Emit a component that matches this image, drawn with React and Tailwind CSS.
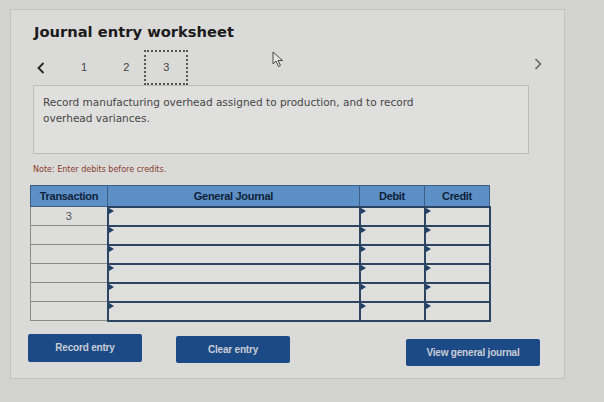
import React from "react";

const rows = ["3", "", "", "", "", ""];

function Marker() {
    return (
        <span className="absolute left-0 top-0 w-0 h-0 border-t-[3px] border-b-[3px] border-l-[5px] border-t-transparent border-b-transparent border-l-[#1f3f66]" />
    );
}

export default function App() {
    return (
        <div className="relative w-[604px] h-[402px] bg-[#d2d3d0] overflow-hidden pt-[9px] pl-[10px]">
            {/* Panel */}
            <div className="w-[555px] h-[370px] border border-[#c2c3c0] bg-[#dadad8] pl-[22px] pt-[13px]">
                <h1 className="font-['DejaVu_Sans',sans-serif] font-bold text-[14.7px] leading-[18px] text-[#1b1b1b] pl-px">
                    Journal entry worksheet
                </h1>

                {/* Step nav */}
                <div className="flex items-center h-[35px] mt-[9px] w-[510px] font-['Liberation_Sans',sans-serif] text-[11px] text-[#444]">
                    <svg width="10" height="14" viewBox="0 0 10 14" className="ml-[3px]">
                        <path d="M7.5 2 L2.5 7 L7.5 12" fill="none" stroke="#222" strokeWidth="1.8" />
                    </svg>
                    <span className="ml-[35px]">1</span>
                    <span className="ml-[36px]">2</span>
                    <div className="ml-[15px] w-[44px] h-[35px] border-2 border-dotted border-[#555] flex items-center justify-center">
                        3
                    </div>
                    <svg width="10" height="14" viewBox="0 0 10 14" className="ml-auto -mt-[8px]">
                        <path d="M2.5 2 L7.5 7 L2.5 12" fill="none" stroke="#666" strokeWidth="1.6" />
                    </svg>
                </div>

                {/* Description */}
                <div className="w-[496px] h-[69px] border border-[#bcbcba] bg-[#dfdfdd] px-[9px] pt-[8px] font-['DejaVu_Sans',sans-serif] text-[10.5px] leading-[16px] text-[#464646]">
                    Record manufacturing overhead assigned to production, and to record
                    <br />
                    overhead variances.
                </div>

                <p className="mt-[11px] font-['DejaVu_Sans',sans-serif] text-[8px] leading-[10px] text-[#8a3b2b]">
                    Note: Enter debits before credits.
                </p>

                {/* Table */}
                <table className="mt-[10px] -ml-[3px] border-collapse font-['Liberation_Sans',sans-serif] text-[11px]">
                    <thead>
                        <tr className="h-[21px] bg-[#5b8fc6] text-[#0f1f38] font-bold">
                            <th className="w-[77px] border border-[#3d5f85] font-bold tracking-[-0.3px]">Transaction</th>
                            <th className="w-[252px] border border-[#3d5f85] font-bold tracking-[-0.3px]">General Journal</th>
                            <th className="w-[65px] border border-[#3d5f85] font-bold tracking-[-0.3px]">Debit</th>
                            <th className="w-[65px] border border-[#3d5f85] font-bold tracking-[-0.3px]">Credit</th>
                        </tr>
                    </thead>
                    <tbody>
                        {rows.map((t, i) => (
                            <tr key={i} className="h-[19px]">
                                <td className="border border-[#8a8a88] bg-[#dddddb] text-center text-[#555] text-[11px]">{t}</td>
                                <td className="relative border-2 border-[#2b4563] bg-[#dededc]"><Marker /></td>
                                <td className="relative border-2 border-[#2b4563] bg-[#dededc]"><Marker /></td>
                                <td className="relative border-2 border-[#2b4563] bg-[#dededc]"><Marker /></td>
                            </tr>
                        ))}
                    </tbody>
                </table>

                {/* Buttons */}
                <div className="flex items-start mt-[12px] -ml-[5px] font-['Liberation_Sans',sans-serif] font-bold text-[10px] text-[#c9cdd6]">
                    <button className="w-[114px] h-[28px] bg-[#1c4a86] rounded-[2px] tracking-[-0.2px]">Record entry</button>
                    <button className="ml-[34px] mt-[2px] w-[114px] h-[27px] bg-[#1c4a86] rounded-[2px] tracking-[-0.2px]">Clear entry</button>
                    <button className="ml-[116px] mt-[5px] w-[134px] h-[27px] bg-[#1c4a86] rounded-[2px] tracking-[-0.2px]">View general journal</button>
                </div>
            </div>

            {/* Mouse pointer */}
            <svg className="absolute left-[272px] top-[51px]" width="14" height="18" viewBox="0 0 14 18">
                <path d="M1 1 L1 13 L4 10 L6.5 15.5 L8.5 14.5 L6 9.5 L10.5 9.5 Z" fill="#e4e4e2" stroke="#4a4a4a" strokeWidth="1" strokeLinejoin="round" />
            </svg>
        </div>
    );
}
